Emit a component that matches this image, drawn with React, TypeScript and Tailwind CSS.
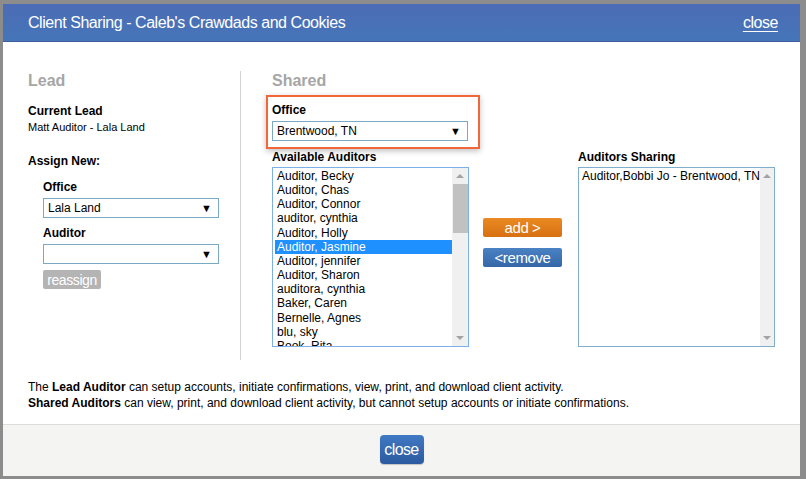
const AVAILABLE = [
  "Auditor, Becky",
  "Auditor, Chas",
  "Auditor, Connor",
  "auditor, cynthia",
  "Auditor, Holly",
  "Auditor, Jasmine",
  "Auditor, jennifer",
  "Auditor, Sharon",
  "auditora, cynthia",
  "Baker, Caren",
  "Bernelle, Agnes",
  "blu, sky",
  "Book, Rita",
]

function Caret() {
  return <span className="text-[11px] leading-none text-black pr-[6px]">▼</span>
}

function Select({ value, width }: { value: string; width: string }) {
  return (
    <div className={`${width} h-[20px] border border-[#7aa9c6] bg-white flex items-center justify-between pl-[4px] text-[12px] text-black`}>
      <span>{value}</span>
      <Caret />
    </div>
  )
}

function Scrollbar({ thumb }: { thumb: boolean }) {
  return (
    <div className="w-[16px] bg-[#f0f0f0] flex flex-col items-center">
      <div className="h-[16px] flex items-center justify-center">
        <div className="w-0 h-0 border-l-[4px] border-r-[4px] border-b-[4px] border-l-transparent border-r-transparent border-b-[#a3a3a3]" />
      </div>
      {thumb && <div className="w-[15px] h-[49px] bg-[#c1c1c1]" />}
      <div className="flex-1" />
      <div className="h-[16px] flex items-center justify-center">
        <div className="w-0 h-0 border-l-[4px] border-r-[4px] border-t-[4px] border-l-transparent border-r-transparent border-t-[#a3a3a3]" />
      </div>
    </div>
  )
}

export default function App() {
  return (
    <div className="w-[806px] h-[479px] bg-[#8c8c8c] pt-[4px] pl-[3px] pr-[6px] pb-[3px] font-['Liberation_Sans',Arial,sans-serif]">
      <div className="h-full flex flex-col bg-white">
        <div className="h-[38px] shrink-0 bg-gradient-to-b from-[#4c6cb6] to-[#4575b8] border-b border-[#3b5f9c] flex items-center justify-between pl-[25px] pr-[22px] text-white text-[16px] tracking-[-0.45px]">
          <span>Client Sharing - Caleb's Crawdads and Cookies</span>
          <span className="underline underline-offset-[3px]">close</span>
        </div>

        <div className="flex-1 px-[25px] pt-[29px]">
          <div className="flex h-[289px]">
            {/* lead column */}
            <div className="w-[217px] border-r border-[#d4d4d4] flex flex-col">
              <div className="h-[20px] leading-[20px] text-[16px] font-bold text-[#a6a6a6]">Lead</div>
              <div className="mt-[13px] leading-[14px] text-[12px] font-bold text-black">Current Lead</div>
              <div className="mt-[2px] leading-[14px] text-[11px] text-black">Matt Auditor - Lala Land</div>
              <div className="mt-[20px] leading-[14px] text-[12px] font-bold text-black">Assign New:</div>
              <div className="pl-[15px] flex flex-col">
                <div className="mt-[12px] leading-[14px] text-[12px] font-bold text-black">Office</div>
                <div className="mt-[4px]">
                  <Select value="Lala Land" width="w-[176px]" />
                </div>
                <div className="mt-[8px] leading-[14px] text-[12px] font-bold text-black">Auditor</div>
                <div className="mt-[4px]">
                  <Select value="" width="w-[176px]" />
                </div>
                <button className="mt-[6px] w-[58px] h-[19px] rounded-[2px] bg-[#b4b4b4] text-white text-[14px] tracking-[-0.4px] leading-none">
                  reassign
                </button>
              </div>
            </div>

            {/* shared column */}
            <div className="pl-[31px] flex flex-col">
              <div className="h-[20px] leading-[20px] text-[16px] font-bold text-[#a6a6a6]">Shared</div>
              <div className="mt-[4px] -ml-[6px] w-[214px] h-[54px] border-2 border-[#f2673a] shadow-[0_2px_6px_rgba(0,0,0,0.25)] pt-[6px] pl-[4px]">
                <div className="leading-[14px] text-[12px] font-bold text-black">Office</div>
                <div className="mt-[4px]">
                  <Select value="Brentwood, TN" width="w-[196px]" />
                </div>
              </div>

              <div className="mt-[1px] flex">
                <div className="flex flex-col">
                  <div className="leading-[14px] text-[12px] font-bold text-black">Available Auditors</div>
                  <div className="mt-[3px] w-[197px] h-[180px] border border-[#7eb0e8] flex overflow-hidden">
                    <div className="flex-1 pt-[1px] pl-[2px] overflow-hidden">
                      {AVAILABLE.map(name => (
                        <div
                          key={name}
                          className={`h-[14.17px] leading-[14.17px] pl-[2px] text-[12px] whitespace-nowrap ${
                            name === "Auditor, Jasmine" ? "bg-[#1e90ff] text-white" : "text-black"
                          }`}
                        >
                          {name}
                        </div>
                      ))}
                    </div>
                    <Scrollbar thumb />
                  </div>
                </div>

                <div className="ml-[14px] pt-[68px] flex flex-col gap-[11px]">
                  <button className="w-[79px] h-[19px] rounded-[2px] bg-gradient-to-b from-[#ea8a22] to-[#d77010] text-white text-[15px] tracking-[-0.4px] leading-none">
                    add &gt;
                  </button>
                  <button className="w-[79px] h-[19px] rounded-[2px] bg-gradient-to-b from-[#4a82c4] to-[#3567a8] text-white text-[15px] tracking-[-0.4px] leading-none">
                    &lt;remove
                  </button>
                </div>

                <div className="ml-[16px] flex flex-col">
                  <div className="leading-[14px] text-[12px] font-bold text-black">Auditors Sharing</div>
                  <div className="mt-[3px] w-[197px] h-[180px] border border-[#7fadcc] flex">
                    <div className="flex-1 pt-[1px] pl-[3px] text-[12px] leading-[14.17px] text-black whitespace-nowrap">
                      Auditor,Bobbi Jo - Brentwood, TN
                    </div>
                    <Scrollbar thumb={false} />
                  </div>
                </div>
              </div>
            </div>
          </div>

          <div className="mt-[19px] text-[12px] leading-[16px] text-black">
            <div>
              The <b>Lead Auditor</b> can setup accounts, initiate confirmations, view, print, and download client activity.
            </div>
            <div>
              <b>Shared Auditors</b> can view, print, and download client activity, but cannot setup accounts or initiate confirmations.
            </div>
          </div>
        </div>

        <div className="h-[52px] shrink-0 border-t border-[#dcdcdc] bg-[#f4f4f2] flex justify-center pt-[10px]">
          <button className="w-[44px] h-[29px] rounded-[4px] bg-gradient-to-b from-[#4179c4] to-[#2b5a9f] text-white text-[16px] tracking-[-0.6px] leading-none shadow-[0_1px_1px_rgba(0,0,0,0.2)]">
            close
          </button>
        </div>
      </div>
    </div>
  )
}
